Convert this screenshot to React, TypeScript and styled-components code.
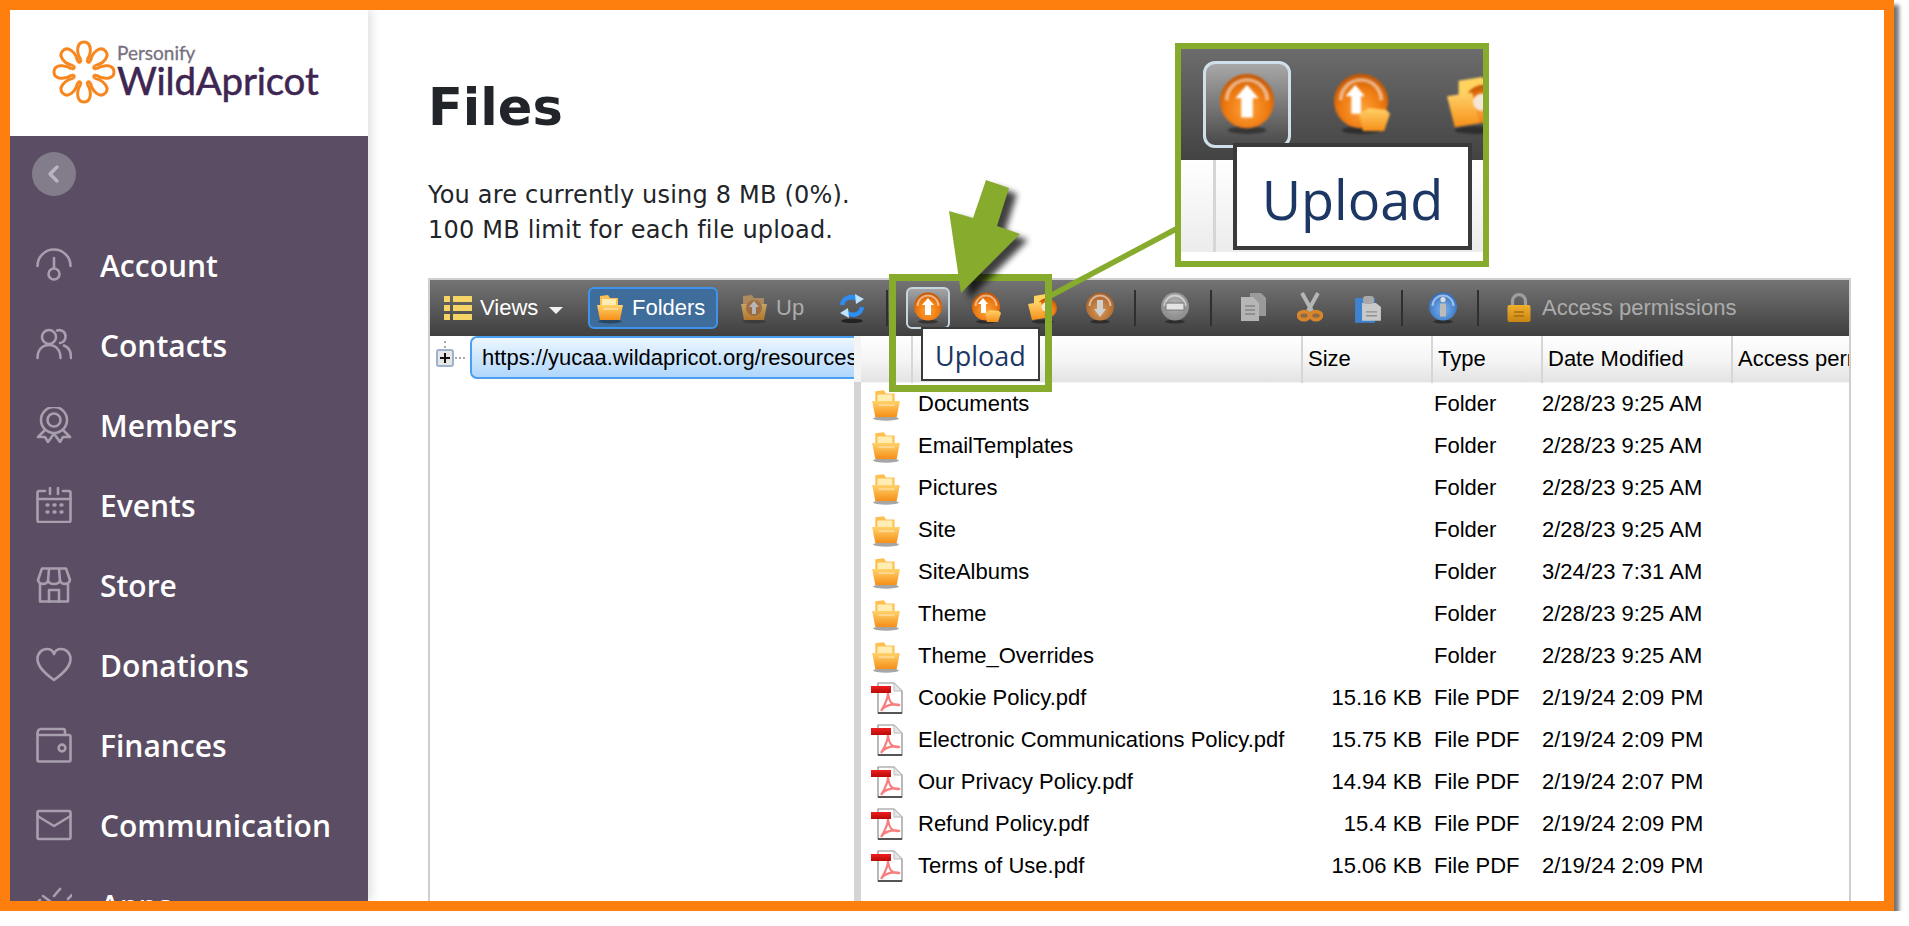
import React from "react";
import styled, { createGlobalStyle } from "styled-components";

const GlobalStyle = createGlobalStyle`
  html, body {
    margin: 0;
    padding: 0;
    background: #fff;
    overflow: hidden;
  }
`;

const GRID_COLUMNS = "50px 390px 130px 110px 190px 118px";
const GREEN = "#87ab2c";

const Frame = styled.div`
  position: relative;
  box-sizing: border-box;
  width: 1894px;
  height: 911px;
  border: 10px solid #ff7f0e;
  box-shadow: 5px 5px 4px rgba(0, 0, 0, 0.55);
  display: flex;
  overflow: hidden;
  background: #fff;
`;

const Sidebar = styled.aside`
  width: 358px;
  flex: none;
  display: flex;
  flex-direction: column;
  box-shadow: 4px 0 8px rgba(40, 50, 60, 0.14);
  z-index: 1;
`;

const LogoBox = styled.div`
  height: 126px;
  flex: none;
  background: #fff;
  display: flex;
  align-items: center;
  padding: 0 0 3px 42px;
  box-sizing: border-box;
  gap: 1px;
`;

const LogoText = styled.div`
  display: flex;
  flex-direction: column;
  font-family: Lato, "Open Sans", sans-serif;
`;

const LogoSmall = styled.span`
  font-size: 19px;
  line-height: 16px;
  color: #77717f;
  -webkit-text-stroke: 0.3px #77717f;
`;

const LogoBig = styled.span`
  font-size: 38.5px;
  line-height: 38px;
  color: #3e2552;
  letter-spacing: -0.2px;
  -webkit-text-stroke: 0.5px #3e2552;
`;

const NavPanel = styled.nav`
  flex: 1;
  min-height: 0;
  background: #5b4d63;
  overflow: hidden;
`;

const CollapseRow = styled.div`
  height: 89px;
  padding: 16px 0 0 22px;
  box-sizing: border-box;
`;

const CollapseBtn = styled.div`
  width: 44px;
  height: 44px;
  border-radius: 50%;
  background: #837d8b;
  display: flex;
  align-items: center;
  justify-content: center;
`;

const NavItem = styled.div`
  height: 80px;
  display: flex;
  align-items: center;
  gap: 28px;
  padding-left: 26px;
  color: #fff;
  font-family: "Open Sans", "Noto Sans", sans-serif;
  font-weight: 600;
  font-size: 30px;
`;

const Main = styled.main`
  flex: 1;
  min-width: 0;
  display: flex;
  flex-direction: column;
  padding: 68px 0 0 60px;
  box-sizing: border-box;
`;

const Heading = styled.h1`
  margin: 0 0 40px;
  font-family: "DejaVu Sans", sans-serif;
  font-weight: 700;
  font-size: 51px;
  line-height: 60px;
  color: #212529;
`;

const Usage = styled.p`
  margin: 0 0 30px;
  font-family: "DejaVu Sans", sans-serif;
  font-size: 24px;
  letter-spacing: 0.2px;
  line-height: 35px;
  color: #212529;
`;

const Panel = styled.section`
  width: 1423px;
  box-sizing: border-box;
  flex: 1;
  min-height: 0;
  border: 2px solid #cfcfcf;
  border-bottom: none;
  display: flex;
  flex-direction: column;
  font-family: "Liberation Sans", Arial, sans-serif;
`;

const Toolbar = styled.div`
  height: 56px;
  flex: none;
  padding-left: 14px;
  display: flex;
  align-items: center;
  background: linear-gradient(#747474, #3f3f3f);
`;

const Slot = styled.div<{ $w: number }>`
  width: ${(p) => p.$w}px;
  flex: none;
  display: flex;
  align-items: center;
`;

const ToolLabel = styled.span<{ $muted?: boolean; $gap?: number }>`
  margin-left: ${(p) => p.$gap ?? 8}px;
  font-size: 22px;
  color: ${(p) => (p.$muted ? "#acacac" : "#fff")};
  white-space: nowrap;
`;

const Caret = styled.span`
  margin-left: 11px;
  margin-top: 4px;
  width: 0;
  height: 0;
  border-left: 7px solid transparent;
  border-right: 7px solid transparent;
  border-top: 7px solid #f2f2f2;
`;

const ActiveButton = styled.div`
  width: 130px;
  height: 42px;
  box-sizing: border-box;
  border: 2px solid #3f93ea;
  border-radius: 6px;
  background: #3f6d9b;
  display: flex;
  align-items: center;
  padding-left: 6px;
`;

const HoverButton = styled.div`
  width: 44px;
  height: 42px;
  box-sizing: border-box;
  border: 2px solid #c6d6de;
  border-radius: 6px;
  background: linear-gradient(#a5a5a5, #4c4c4c);
  display: flex;
  align-items: center;
  justify-content: center;
`;

const Separator = styled.div`
  width: 2px;
  height: 36px;
  background: #2f2f2f;
`;

const PanelBody = styled.div`
  flex: 1;
  min-height: 0;
  display: flex;
`;

const TreePane = styled.div`
  width: 424px;
  flex: none;
  overflow: hidden;
`;

const TreeRow = styled.div`
  height: 43px;
  display: flex;
  align-items: center;
`;

const Expander = styled.div`
  position: relative;
  margin-left: 6px;
  width: 18px;
  height: 18px;
  flex: none;
  box-sizing: border-box;
  border: 2px solid #9fb2cc;
  border-radius: 3px;
  background: #e6e6e6;
  color: #111;
  display: flex;
  align-items: center;
  justify-content: center;

  &::before {
    content: "";
    position: absolute;
    left: 6px;
    top: -10px;
    height: 7px;
    border-left: 2px dotted #aaa;
  }
  &::after {
    content: "";
    position: absolute;
    left: 17px;
    top: 6px;
    width: 10px;
    border-top: 2px dotted #aaa;
  }
`;

const TreeNode = styled.div`
  margin-left: 16px;
  flex: 1;
  height: 43px;
  box-sizing: border-box;
  border: 2px solid #4b9ff0;
  border-right: none;
  border-radius: 7px 0 0 7px;
  background: linear-gradient(#ecf6fe, #b0d7fc);
  padding-left: 10px;
  font-size: 22px;
  line-height: 39px;
  color: #000;
  white-space: nowrap;
  overflow: hidden;
`;

const Splitter = styled.div`
  width: 7px;
  flex: none;
  background: linear-gradient(#f4f4f4, #f4f4f4 46px, #d4d4d4 46px);
`;

const ListPane = styled.div`
  flex: 1;
  min-width: 0;
  overflow: hidden;
`;

const HeaderRow = styled.div`
  height: 47px;
  display: grid;
  grid-template-columns: ${GRID_COLUMNS};
  background: linear-gradient(#fff, #f5f5f5 50%, #e3e3e3 97%, #fff);
`;

const HeaderCell = styled.div`
  border-left: 2px solid #d6d6d6;
  padding-left: 5px;
  font-size: 22px;
  line-height: 46px;
  color: #000;
  white-space: nowrap;
  overflow: hidden;
`;

const FileRow = styled.div`
  height: 42px;
  display: grid;
  grid-template-columns: ${GRID_COLUMNS};
  align-items: center;
  font-size: 22px;
  color: #000;
  white-space: nowrap;
`;

const FileIconCell = styled.div`
  padding-left: 10px;
  display: flex;
`;

const NameCell = styled.div`
  padding-left: 7px;
`;

const SizeCell = styled.div`
  text-align: right;
  padding-right: 9px;
`;

const TypeCell = styled.div`
  padding-left: 3px;
`;

const DateCell = styled.div`
  padding-left: 1px;
`;

const Tooltip = styled.div`
  position: absolute;
  left: 911px;
  top: 317px;
  width: 119px;
  height: 54px;
  box-sizing: border-box;
  border: 2px solid #3a3a3a;
  padding-top: 3px;
  background: #fff;
  z-index: 3;
  display: flex;
  align-items: center;
  justify-content: center;
  font-family: "Open Sans", sans-serif;
  font-size: 27px;
  color: #1c3763;
`;

const HighlightBox = styled.div`
  position: absolute;
  left: 879px;
  top: 264px;
  width: 163px;
  height: 118px;
  box-sizing: border-box;
  border: 7px solid ${GREEN};
  z-index: 4;
`;

const Overlay = styled.svg`
  position: absolute;
  left: -10px;
  top: -10px;
  width: 1894px;
  height: 911px;
  z-index: 5;
  pointer-events: none;
`;

const Callout = styled.div`
  position: absolute;
  left: 1165px;
  top: 33px;
  width: 314px;
  height: 224px;
  box-sizing: border-box;
  border: 6px solid ${GREEN};
  background: #fff;
  overflow: hidden;
  z-index: 6;
`;

const CalloutBar = styled.div`
  height: 111px;
  display: flex;
  align-items: center;
  padding: 12px 0 12px 22px;
  box-sizing: border-box;
  gap: 57px;
  background: linear-gradient(#6c6c6c, #434343);

  svg {
    filter: blur(1.1px);
  }
`;

const CalloutButton = styled.div`
  width: 88px;
  height: 87px;
  flex: none;
  box-sizing: border-box;
  border: 3px solid #cfe0ea;
  border-radius: 12px;
  background: linear-gradient(#a8a8a8, #4a4a4a);
  display: flex;
  align-items: center;
  justify-content: center;
  margin-right: -16px;
`;

const CalloutHeader = styled.div`
  height: 92px;
  margin-left: 32px;
  border-left: 3px solid #d6d6d6;
`;

const CalloutStrip = styled.div`
  height: 92px;
  background: linear-gradient(#fff, #ececec);
`;

const CalloutTip = styled.div`
  position: absolute;
  left: 52px;
  top: 94px;
  width: 239px;
  height: 107px;
  box-sizing: border-box;
  border: 4px solid #3a3a3a;
  padding-top: 5px;
  background: #fff;
  display: flex;
  align-items: center;
  justify-content: center;
  font-family: "Open Sans", sans-serif;
  font-size: 54px;
  color: #1c3763;
`;

const IconSvg = styled.svg`
  flex: none;
  display: block;
  filter: blur(0.45px);
`;

type IconProps = { size?: number };

const SharedDefs = () => (
  <svg width="0" height="0" style={{ position: "absolute" }}>
    <defs>
      <radialGradient id="ballOrange" cx="50%" cy="65%" r="60%">
        <stop offset="0%" stopColor="#ffa23a" />
        <stop offset="65%" stopColor="#ee7a10" />
        <stop offset="100%" stopColor="#c85a05" />
      </radialGradient>
      <radialGradient id="ballDim" cx="50%" cy="65%" r="60%">
        <stop offset="0%" stopColor="#d99a5c" />
        <stop offset="100%" stopColor="#a8622a" />
      </radialGradient>
      <radialGradient id="ballGray" cx="50%" cy="40%" r="60%">
        <stop offset="0%" stopColor="#b4b4b4" />
        <stop offset="100%" stopColor="#8a8a8a" />
      </radialGradient>
      <radialGradient id="ballBlue" cx="50%" cy="60%" r="60%">
        <stop offset="0%" stopColor="#7fb2ea" />
        <stop offset="100%" stopColor="#2f6fc0" />
      </radialGradient>
      <linearGradient id="folderFront" x1="0" y1="0" x2="0" y2="1">
        <stop offset="0%" stopColor="#ffd36a" />
        <stop offset="100%" stopColor="#f68f18" />
      </linearGradient>
      <linearGradient id="lockBody" x1="0" y1="0" x2="0" y2="1">
        <stop offset="0%" stopColor="#efb02c" />
        <stop offset="100%" stopColor="#c98413" />
      </linearGradient>
      <linearGradient id="pdfBand" x1="0" y1="0" x2="0" y2="1">
        <stop offset="0%" stopColor="#f02020" />
        <stop offset="100%" stopColor="#b80808" />
      </linearGradient>
      <filter id="softShadow">
        <feGaussianBlur stdDeviation="3" />
      </filter>
    </defs>
  </svg>
);

const ViewsIcon = ({ size = 28 }: IconProps) => (
  <IconSvg width={size} height={size} viewBox="0 0 28 28">
    {[2, 11, 20].map((y) => (
      <g key={y} fill="#f4d466">
        <rect x="0" y={y} width="6" height="6" />
        <rect x="9" y={y} width="19" height="6" />
      </g>
    ))}
  </IconSvg>
);

const FolderIcon = ({ size = 28 }: IconProps) => (
  <IconSvg width={size} height={size * 1.14} viewBox="0 0 28 32">
    <ellipse cx="14" cy="29.5" rx="12" ry="2" fill="#000" opacity="0.35" />
    <path d="M4 4 L12 3 L14 6 L22 6 L22 14 L4 14 Z" fill="#ffbf50" />
    <path d="M6 7 L20 7 L20 14 L6 14 Z" fill="#ffedb4" />
    <path d="M1 13 L27 13 L24 28 L4 28 Z" fill="url(#folderFront)" />
    <path d="M7 17 L22 17" stroke="#fff" strokeOpacity="0.35" strokeWidth="2" />
  </IconSvg>
);

const UpIcon = ({ size = 28 }: IconProps) => (
  <IconSvg width={size} height={size * 1.14} viewBox="0 0 28 32" opacity={0.62}>
    <ellipse cx="14" cy="29.5" rx="12" ry="2" fill="#000" opacity="0.35" />
    <path d="M3 4 L12 3 L14 6 L24 6 L24 14 L3 14 Z" fill="#d8a35a" />
    <path d="M1 12 L27 12 L24 28 L4 28 Z" fill="url(#folderFront)" />
    <circle cx="14" cy="16" r="8" fill="#c87a35" />
    <path d="M14 9 L19 15 L16 15 L16 22 L12 22 L12 15 L9 15 Z" fill="#eee" />
  </IconSvg>
);

const RefreshIcon = ({ size = 28 }: IconProps) => (
  <IconSvg width={size} height={size * 1.14} viewBox="0 0 28 32">
    <ellipse cx="14" cy="29" rx="11" ry="2.2" fill="#000" opacity="0.55" />
    <path d="M4 13 C5 6 13 3 19 7" fill="none" stroke="#2e8df0" strokeWidth="4.5" />
    <path d="M24 15 C23 22 15 25 9 21" fill="none" stroke="#2e8df0" strokeWidth="4.5" />
    <path d="M17 2 L26 7 L18 12 Z" fill="#bfe3ff" />
    <path d="M11 26 L2 21 L10 16 Z" fill="#bfe3ff" />
  </IconSvg>
);

// kulka z ikona w srodku, te same proporcje co w pasku
const BallIcon = ({
  size = 30,
  fill = "ballOrange",
  children,
}: IconProps & { fill?: string; children?: React.ReactNode }) => (
  <IconSvg width={size} height={size * 1.07} viewBox="0 0 30 32">
    <ellipse cx="15" cy="29.5" rx="10" ry="2" fill="#000" opacity="0.4" />
    <circle cx="15" cy="14.5" r="14" fill={`url(#${fill})`} />
    <path
      d="M4.5 14 A10.5 10.5 0 0 1 25.5 14"
      fill="none"
      stroke="#fff"
      strokeOpacity="0.5"
      strokeWidth="2"
    />
    {children}
  </IconSvg>
);

const UploadIcon = ({ size }: IconProps) => (
  <BallIcon size={size}>
    <path d="M15 6 L21 13 L18 13 L18 23 L12 23 L12 13 L9 13 Z" fill="#fff" />
  </BallIcon>
);

const UploadFolderIcon = ({ size }: IconProps) => (
  <BallIcon size={size}>
    <path d="M12 6 L17 12 L15 12 L15 21 L10 21 L10 12 L7 12 Z" fill="#fff" />
    <path d="M14 21 L19 18 L28 19 L30 21 L27 30 L16 30 Z" fill="url(#folderFront)" />
  </BallIcon>
);

const FolderSyncIcon = ({ size = 30 }: IconProps) => (
  <IconSvg width={size} height={size * 1.07} viewBox="0 0 30 32">
    <ellipse cx="15" cy="29.5" rx="11" ry="2" fill="#000" opacity="0.4" />
    <path d="M6 4 L18 2 L24 7 L24 20 L6 20 Z" fill="#ffd35e" />
    <circle cx="19" cy="16" r="10" fill="url(#ballOrange)" />
    <path d="M0 12 L13 10 L17 26 L4 28 Z" fill="url(#folderFront)" />
    <circle cx="18" cy="15" r="4.5" fill="#f6e6d8" />
  </IconSvg>
);

const DownloadIcon = ({ size }: IconProps) => (
  <BallIcon size={size} fill="ballDim">
    <path d="M15 25 L21 17 L18 17 L18 8 L12 8 L12 17 L9 17 Z" fill="#d0d0d0" />
  </BallIcon>
);

const MinusIcon = ({ size }: IconProps) => (
  <BallIcon size={size} fill="ballGray">
    <rect x="6" y="11" width="18" height="7" fill="#e4e4e4" stroke="#777" />
  </BallIcon>
);

const InfoIcon = ({ size }: IconProps) => (
  <BallIcon size={size} fill="ballBlue">
    <circle cx="15" cy="7.5" r="2.6" fill="#ddd" />
    <rect x="12" y="11.5" width="6" height="13" fill="#bbb" />
  </BallIcon>
);

const CopyIcon = ({ size = 27 }: IconProps) => (
  <IconSvg width={size} height={size * 1.15} viewBox="0 0 27 31" opacity={0.85}>
    <path d="M10 1 L21 1 L26 6 L26 24 L10 24 Z" fill="#a5a5a5" />
    <path d="M1 5 L13 5 L19 11 L19 29 L1 29 Z" fill="#c6c6c6" />
    <path d="M5 14 H15 M5 18 H15 M5 22 H15" stroke="#8d8d8d" strokeWidth="1.5" />
  </IconSvg>
);

const ScissorsIcon = ({ size = 26 }: IconProps) => (
  <IconSvg width={size} height={size * 1.2} viewBox="0 0 26 31">
    <path d="M5 1 L15 19 M21 1 L11 19" stroke="#b5b5b5" strokeWidth="4" />
    <ellipse cx="7" cy="23.5" rx="5.5" ry="4" fill="#8a6a48" stroke="#d9862a" strokeWidth="3.6" />
    <ellipse cx="19" cy="23.5" rx="5.5" ry="4" fill="#8a6a48" stroke="#d9862a" strokeWidth="3.6" />
  </IconSvg>
);

const PasteIcon = ({ size = 28 }: IconProps) => (
  <IconSvg width={size} height={size * 1.1} viewBox="0 0 28 31">
    <rect x="1" y="5" width="20" height="25" fill="#3f83d0" />
    <path d="M8 10 L22 10 L27 14 L27 28 L8 28 Z" fill="#c9c9c9" />
    <rect x="9" y="3" width="11" height="8" rx="3" fill="#a8a8a8" />
    <path d="M12 19 H23 M12 23 H23" stroke="#8f8f8f" strokeWidth="1.5" />
  </IconSvg>
);

const LockIcon = ({ size = 24 }: IconProps) => (
  <IconSvg width={size} height={size * 1.3} viewBox="0 0 24 31">
    <path
      d="M5.5 15 V9 A6.5 6.5 0 0 1 18.5 9 V15"
      fill="none"
      stroke="#9e9e9e"
      strokeWidth="3.2"
    />
    <rect x="0.5" y="13" width="23" height="17" rx="2" fill="url(#lockBody)" />
    <path d="M7 20 H17 M7 24 H17" stroke="#a66e10" strokeWidth="1.5" />
  </IconSvg>
);

const PdfIcon = () => (
  <IconSvg width={32} height={32} viewBox="0 0 32 32">
    <path d="M7 1 L23 1 L31 9 L31 31 L7 31 Z" fill="#fff" stroke="#8c8c8c" strokeWidth="1.2" />
    <path d="M7 31 H31" stroke="#555" strokeWidth="2" />
    <path d="M23 1 L23 9 L31 9" fill="#e6e6e6" stroke="#bbb" />
    <rect x="0" y="4" width="20" height="7" fill="url(#pdfBand)" />
    <path
      d="M17 11 C18 20 21 24 29 23 C21 21 13 24 10 29 C13 24 17 18 17 11 Z"
      fill="none"
      stroke="#f77f7f"
      strokeWidth="2.2"
    />
  </IconSvg>
);

const NavSvg = styled.svg`
  width: 36px;
  height: 36px;
  flex: none;
  fill: none;
  stroke: #a79fad;
  stroke-width: 2.6;
  stroke-linecap: round;
  stroke-linejoin: round;
`;

const AccountGlyph = () => (
  <NavSvg viewBox="0 0 36 36">
    <path d="M1.5 19 A16.5 16.5 0 0 1 34.5 19" />
    <path d="M18 11 V21" />
    <circle cx="18" cy="27" r="5.5" />
  </NavSvg>
);

const ContactsGlyph = () => (
  <NavSvg viewBox="0 0 36 36">
    <circle cx="13" cy="10" r="7" />
    <path d="M1.5 31 C1.5 23 6 18 13 18 C20 18 24.5 23 24.5 31" />
    <path d="M21 3.5 C26 2 30 5.5 29.5 10 C29.3 13 27 15.5 24 16" />
    <path d="M28 18.5 C32.5 20 35 24.5 35 31" />
  </NavSvg>
);

const MembersGlyph = () => (
  <NavSvg viewBox="0 0 36 36">
    <circle cx="18" cy="13" r="13" />
    <circle cx="18" cy="13" r="6.5" />
    <path d="M9 23 L2 30 L9 30 L12 35 L17 28" />
    <path d="M27 23 L34 30 L27 30 L24 35 L19 28" />
  </NavSvg>
);

const EventsGlyph = () => (
  <NavSvg viewBox="0 0 36 36">
    <path d="M9 4 H3 Q1.5 4 1.5 6 V33 Q1.5 35 3 35 H33 Q34.5 35 34.5 33 V6 Q34.5 4 33 4 H27" />
    <path d="M14 1 V7 M22 1 V7 M1.5 12 H34.5" />
    <path d="M11 18 H12 M18 18 H19 M25 18 H26 M11 25 H12 M18 25 H19 M25 25 H26" strokeWidth="3.4" />
  </NavSvg>
);

const StoreGlyph = () => (
  <NavSvg viewBox="0 0 36 36">
    <path d="M6 1.5 H30 L34 13 C33 18 26 18 24 14 C22 18 14 18 12 14 C10 18 3 18 2 13 Z" />
    <path d="M4 18 V34.5 H32 V18" />
    <path d="M13 34.5 V23 H23 V34.5" />
    <path d="M12 14 L13 2 M24 14 L23 2" />
  </NavSvg>
);

const HeartGlyph = () => (
  <NavSvg viewBox="0 0 36 36">
    <path d="M18 33 C7 25 1.5 19 1.5 12 C1.5 6 6 2 11 2 C14 2 17 4 18 7 C19 4 22 2 25 2 C30 2 34.5 6 34.5 12 C34.5 19 29 25 18 33 Z" />
  </NavSvg>
);

const WalletGlyph = () => (
  <NavSvg viewBox="0 0 36 36">
    <path d="M1.5 7 V33 Q1.5 34.5 3 34.5 H33 Q34.5 34.5 34.5 33 V10 Q34.5 8 33 8 H1.5" />
    <path d="M1.5 7 Q1.5 2 5 2 H27 Q29 2 29 4 V8" />
    <circle cx="26" cy="21" r="3.4" />
  </NavSvg>
);

const MailGlyph = () => (
  <NavSvg viewBox="0 0 36 36">
    <rect x="1.5" y="4" width="33" height="28" rx="1.5" />
    <path d="M1.5 9 L18 19 L34.5 9" />
  </NavSvg>
);

const AppsGlyph = () => (
  <NavSvg viewBox="0 0 36 36">
    <path d="M24 2 L18 9 M7 9 L30 26 M4 13 L0 17 M32 12 L36 8" />
  </NavSvg>
);

const Flower = () => (
  <svg width="64" height="64" viewBox="-32 -32 64 64">
    <g fill="none" stroke="#f7861e" strokeWidth="3" filter="blur(0.3px)">
      {[0, 45, 90, 135, 180, 225, 270, 315].map((deg) => (
        <g key={deg} transform={`rotate(${deg})`}>
          <path d="M-3 -12 C-8.5 -20 -7 -30 0 -30 C7 -30 8.5 -20 3 -12" />
          <path d="M3 -12 Q3.44 -8.31 6.36 -10.6" />
        </g>
      ))}
    </g>
  </svg>
);

const navItems = [
  { label: "Account", icon: <AccountGlyph /> },
  { label: "Contacts", icon: <ContactsGlyph /> },
  { label: "Members", icon: <MembersGlyph /> },
  { label: "Events", icon: <EventsGlyph /> },
  { label: "Store", icon: <StoreGlyph /> },
  { label: "Donations", icon: <HeartGlyph /> },
  { label: "Finances", icon: <WalletGlyph /> },
  { label: "Communication", icon: <MailGlyph /> },
  { label: "Apps", icon: <AppsGlyph /> },
];

const files = [
  { name: "Documents", size: "", type: "Folder", date: "2/28/23 9:25 AM" },
  { name: "EmailTemplates", size: "", type: "Folder", date: "2/28/23 9:25 AM" },
  { name: "Pictures", size: "", type: "Folder", date: "2/28/23 9:25 AM" },
  { name: "Site", size: "", type: "Folder", date: "2/28/23 9:25 AM" },
  { name: "SiteAlbums", size: "", type: "Folder", date: "3/24/23 7:31 AM" },
  { name: "Theme", size: "", type: "Folder", date: "2/28/23 9:25 AM" },
  { name: "Theme_Overrides", size: "", type: "Folder", date: "2/28/23 9:25 AM" },
  { name: "Cookie Policy.pdf", size: "15.16 KB", type: "File PDF", date: "2/19/24 2:09 PM" },
  { name: "Electronic Communications Policy.pdf", size: "15.75 KB", type: "File PDF", date: "2/19/24 2:09 PM" },
  { name: "Our Privacy Policy.pdf", size: "14.94 KB", type: "File PDF", date: "2/19/24 2:07 PM" },
  { name: "Refund Policy.pdf", size: "15.4 KB", type: "File PDF", date: "2/19/24 2:09 PM" },
  { name: "Terms of Use.pdf", size: "15.06 KB", type: "File PDF", date: "2/19/24 2:09 PM" },
];

const App = () => {
  return (
    <>
      <GlobalStyle />
      <SharedDefs />
      <Frame>
        <Sidebar>
          <LogoBox>
            <Flower />
            <LogoText>
              <LogoSmall>Personify</LogoSmall>
              <LogoBig>WildApricot</LogoBig>
            </LogoText>
          </LogoBox>
          <NavPanel>
            <CollapseRow>
              <CollapseBtn>
                <svg width="16" height="20" viewBox="0 0 16 20">
                  <path
                    d="M11 3 L4 10 L11 17"
                    fill="none"
                    stroke="#b9b4bf"
                    strokeWidth="3.4"
                    strokeLinecap="round"
                    strokeLinejoin="round"
                  />
                </svg>
              </CollapseBtn>
            </CollapseRow>
            {navItems.map((item) => (
              <NavItem key={item.label}>
                {item.icon}
                {item.label}
              </NavItem>
            ))}
          </NavPanel>
        </Sidebar>

        <Main>
          <Heading>Files</Heading>
          <Usage>
            You are currently using 8 MB (0%).
            <br />
            100 MB limit for each file upload.
          </Usage>
          <Panel>
            <Toolbar>
              <Slot $w={144}>
                <ViewsIcon />
                <ToolLabel>Views</ToolLabel>
                <Caret />
              </Slot>
              <Slot $w={152}>
                <ActiveButton>
                  <FolderIcon />
                  <ToolLabel>Folders</ToolLabel>
                </ActiveButton>
              </Slot>
              <Slot $w={98}>
                <UpIcon />
                <ToolLabel $muted>Up</ToolLabel>
              </Slot>
              <Slot $w={48}>
                <RefreshIcon />
              </Slot>
              <Slot $w={20}>
                <Separator />
              </Slot>
              <Slot $w={65}>
                <HoverButton>
                  <UploadIcon />
                </HoverButton>
              </Slot>
              <Slot $w={57}>
                <UploadFolderIcon />
              </Slot>
              <Slot $w={57}>
                <FolderSyncIcon />
              </Slot>
              <Slot $w={49}>
                <DownloadIcon />
              </Slot>
              <Slot $w={26}>
                <Separator />
              </Slot>
              <Slot $w={50}>
                <MinusIcon />
              </Slot>
              <Slot $w={30}>
                <Separator />
              </Slot>
              <Slot $w={57}>
                <CopyIcon />
              </Slot>
              <Slot $w={57}>
                <ScissorsIcon />
              </Slot>
              <Slot $w={47}>
                <PasteIcon />
              </Slot>
              <Slot $w={27}>
                <Separator />
              </Slot>
              <Slot $w={49}>
                <InfoIcon />
              </Slot>
              <Slot $w={30}>
                <Separator />
              </Slot>
              <Slot $w={240}>
                <LockIcon />
                <ToolLabel $muted $gap={11}>
                  Access permissions
                </ToolLabel>
              </Slot>
            </Toolbar>
            <PanelBody>
              <TreePane>
                <TreeRow>
                  <Expander>
                    <svg width="10" height="10" viewBox="0 0 10 10">
                      <path d="M0 5 H10 M5 0 V10" stroke="#111" strokeWidth="2" />
                    </svg>
                  </Expander>
                  <TreeNode>https://yucaa.wildapricot.org/resources</TreeNode>
                </TreeRow>
              </TreePane>
              <Splitter />
              <ListPane>
                <HeaderRow>
                  <span />
                  <HeaderCell />
                  <HeaderCell>Size</HeaderCell>
                  <HeaderCell>Type</HeaderCell>
                  <HeaderCell>Date Modified</HeaderCell>
                  <HeaderCell>Access permissions</HeaderCell>
                </HeaderRow>
                {files.map((file) => (
                  <FileRow key={file.name}>
                    <FileIconCell>
                      {file.type === "Folder" ? <FolderIcon size={30} /> : <PdfIcon />}
                    </FileIconCell>
                    <NameCell>{file.name}</NameCell>
                    <SizeCell>{file.size}</SizeCell>
                    <TypeCell>{file.type}</TypeCell>
                    <DateCell>{file.date}</DateCell>
                  </FileRow>
                ))}
              </ListPane>
            </PanelBody>
          </Panel>
        </Main>

        <Tooltip>Upload</Tooltip>
        <HighlightBox />
        <Overlay viewBox="0 0 1894 911">
          <line x1="1050" y1="296" x2="1178" y2="228" stroke={GREEN} strokeWidth="5.5" />
          <polygon
            points="994,186 1017,194 1005,232 1028,240 969,299 957,217 981,224"
            fill="#000"
            opacity="0.75"
            filter="url(#softShadow)"
          />
          <polygon
            points="986,180 1009,188 997,226 1020,234 961,293 949,211 973,218"
            fill={GREEN}
          />
        </Overlay>
        <Callout>
          <CalloutBar>
            <CalloutButton>
              <UploadIcon size={58} />
            </CalloutButton>
            <UploadFolderIcon size={58} />
            <FolderSyncIcon size={58} />
          </CalloutBar>
          <CalloutStrip>
            <CalloutHeader />
          </CalloutStrip>
          <CalloutTip>Upload</CalloutTip>
        </Callout>
      </Frame>
    </>
  );
};

export default App;
